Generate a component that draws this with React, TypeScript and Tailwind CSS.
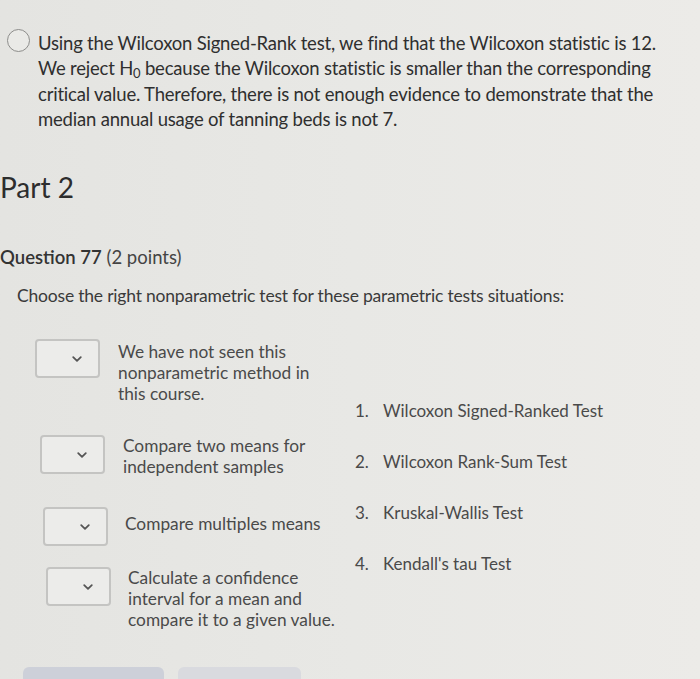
import React from "react";

function Chevron() {
  return (
    <svg width="12" height="8" viewBox="0 0 12 8" fill="none">
      <path d="M2.2 2.2 L6 5.8 L9.8 2.2" stroke="#555" strokeWidth="1.8" strokeLinecap="round" strokeLinejoin="round" />
    </svg>
  );
}

function Select() {
  return (
    <div className="w-[65px] h-[39px] shrink-0 rounded-[4px] border-2 border-[#c4c4c2] bg-[#ececea] flex items-center justify-end pr-[15px]">
      <Chevron />
    </div>
  );
}

export default function App() {
  const rows = [
    { pl: "pl-[35px]", mt: "mt-[0px]", gap: "gap-[18px]", lines: ["We have not seen this", "nonparametric method in", "this course."], top: "mt-[2px]" },
    { pl: "pl-[40px]", mt: "mt-[31px]", gap: "gap-[18px]", lines: ["Compare two means for", "independent samples"], top: "mt-[0px]" },
    { pl: "pl-[43px]", mt: "mt-[30px]", gap: "gap-[17px]", lines: ["Compare multiples means"], top: "mt-[6px]" },
    { pl: "pl-[46px]", mt: "mt-[21px]", gap: "gap-[17px]", lines: ["Calculate a confidence", "interval for a mean and", "compare it to a given value."], top: "mt-[0px]" },
  ];
  const options = [
    { n: "1.", t: "Wilcoxon Signed-Ranked Test" },
    { n: "2.", t: "Wilcoxon Rank-Sum Test" },
    { n: "3.", t: "Kruskal-Wallis Test" },
    { n: "4.", t: "Kendall's tau Test" },
  ];
  return (
    <div className="w-[700px] h-[679px] overflow-hidden bg-gradient-to-r from-[#e4e4e1] via-[#e8e8e5] to-[#ecebe8] font-['Lato','Noto_Sans',sans-serif] relative">
      {/* answer option */}
      <div className="flex items-start pt-[31px] pl-[7px]">
        <div className="w-[23px] h-[23px] rounded-full border-[1.5px] border-[#8d8d8b] bg-[#eaeae7] shrink-0 -mt-[2px]" />
        <p className="ml-[8px] text-[18.5px] leading-[24.5px] text-[#2f2f2f] tracking-[-0.2px] w-[650px]">
          Using the Wilcoxon Signed-Rank test, we find that the Wilcoxon statistic is 12.
          <br />
          We reject H<span className="text-[13px] relative top-[3px]">0</span> because the Wilcoxon statistic is smaller than the corresponding
          <br />
          critical value. Therefore, there is not enough evidence to demonstrate that the
          <br />
          median annual usage of tanning beds is not 7.
        </p>
      </div>

      <h2 className="mt-[39px] text-[28px] leading-[34px] text-[#2d2d2d]">Part 2</h2>

      <div className="mt-[41px] text-[18.5px] leading-[24px] text-[#333]">
        <span className="font-semibold">Question 77</span> <span className="text-[#444]">(2 points)</span>
      </div>

      <p className="mt-[15px] ml-[17px] text-[17.5px] leading-[24px] text-[#3a3a3a] tracking-[-0.2px]">
        Choose the right nonparametric test for these parametric tests situations:
      </p>

      <div className="flex mt-[31px]">
        <div className="flex flex-col w-[350px]">
          {rows.map((r, i) => (
            <div key={i} className={`flex items-start ${r.pl} ${r.mt} ${r.gap}`}>
              <Select />
              <div className={`${r.top} text-[17.3px] leading-[21px] text-[#4a4a4a]`}>
                {r.lines.map((l, j) => (
                  <div key={j}>{l}</div>
                ))}
              </div>
            </div>
          ))}
        </div>
        <div className="flex flex-col pt-[61px] gap-[29px] pl-[5px]">
          {options.map((o) => (
            <div key={o.n} className="flex text-[17px] leading-[22px] text-[#4a4a4a]">
              <span className="w-[28px]">{o.n}</span>
              <span>{o.t}</span>
            </div>
          ))}
        </div>
      </div>

      <div className="absolute left-0 bottom-0 w-full flex gap-[14px] pl-[23px]">
        <div className="w-[141px] h-[12px] rounded-t-[6px] bg-[#cdd0d9]" />
        <div className="w-[123px] h-[12px] rounded-t-[6px] bg-[#d9dadf]" />
      </div>
    </div>
  );
}
